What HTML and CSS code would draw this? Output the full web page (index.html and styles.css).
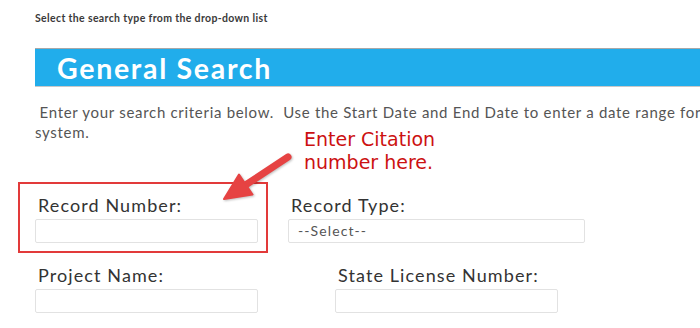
FILE: index.html
```html
<!DOCTYPE html>
<html lang="en">
  <head>
    <meta charset="UTF-8" />
    <meta name="viewport" content="width=device-width, initial-scale=1.0" />
    <title>General Search</title>
    <link rel="stylesheet" href="styles.css">
  </head>
  <body>
    <div class="page">
      <p class="hint">Select the search type from the drop-down list</p>

      <!-- Banner -->
      <div class="banner">
        <h1>General Search</h1>
      </div>

      <p class="intro">
        <span class="line">&nbsp;Enter your search criteria below.&nbsp; Use the Start Date and End Date to enter a date range for</span><br />
        system.
      </p>

      <!-- Form -->
      <div class="form">
        <div class="row row-first">
          <div class="field">
            <label for="recordNumber">Record Number:</label>
            <input type="text" id="recordNumber" class="short" />
          </div>
          <div class="field">
            <label for="recordType">Record Type:</label>
            <div class="select" id="recordType">--Select--</div>
          </div>
        </div>

        <div class="row row-second">
          <div class="field">
            <label for="projectName">Project Name:</label>
            <input type="text" id="projectName" class="short" />
          </div>
          <div class="field">
            <label for="licenseNumber">State License Number:</label>
            <input type="text" id="licenseNumber" class="short" />
          </div>
        </div>
      </div>

      <!-- Annotation -->
      <div class="callout">Enter Citation<br />number here.</div>
      <div class="highlight"></div>
      <svg class="arrow" width="700" height="328" viewBox="0 0 700 328">
        <line x1="288" y1="157" x2="244" y2="186" stroke="#e64343" stroke-width="7" stroke-linecap="round" />
        <polygon points="224,199 239,174.5 252.5,194.5" fill="#e64343" stroke="#e64343" stroke-width="2" stroke-linejoin="round" />
      </svg>
    </div>
  </body>
</html>
```

FILE: styles.css
```css
body {
  margin: 0;
  font-family: Lato, "Open Sans", sans-serif;
  background: #fff;
  color: #333;
}

.page {
  position: relative;
  width: 700px;
  height: 328px;
  overflow: hidden;
  padding-left: 35px;
  box-sizing: border-box;
}

.hint {
  margin: 12px 0 0;
  font-size: 10.5px;
  line-height: 12px;
  font-weight: bold;
  letter-spacing: 0.35px;
  color: #3a3a3a;
}

.banner {
  margin-top: 24px;
  width: 700px;
  height: 37px;
  background: #21adeb;
  border-top: 1px solid #a8a8a8;
  border-bottom: 1px solid #c8c8c8;
}

.banner h1 {
  margin: 0;
  padding: 2px 0 0 22px;
  font-size: 28.5px;
  line-height: 35px;
  font-weight: bold;
  letter-spacing: 1.7px;
  color: #fff;
}

.intro {
  margin: 15px 0 0;
  font-size: 15px;
  line-height: 20px;
  letter-spacing: 0.7px;
  color: #555;
}

.intro .line {
  white-space: nowrap;
}

.form {
  margin-top: 52px;
}

.row {
  display: flex;
}

.row-first {
  gap: 30px;
}

.row-second {
  gap: 77px;
  margin-top: 21px;
}

.field label {
  display: block;
  padding-left: 3px;
  font-size: 18px;
  line-height: 22px;
  letter-spacing: 1.1px;
  color: #333;
}

.field input,
.field .select {
  display: block;
  margin-top: 3px;
  height: 24px;
  border: 1px solid #e2e2e2;
  border-radius: 2px;
  box-sizing: border-box;
  background: #fff;
  outline: none;
}

.field input.short {
  width: 223px;
}

.field .select {
  width: 297px;
  padding-left: 9px;
  font-size: 14px;
  line-height: 22px;
  letter-spacing: 1.1px;
  color: #555;
}

.callout {
  position: absolute;
  left: 304px;
  top: 128px;
  font-family: "DejaVu Sans", Verdana, sans-serif;
  font-size: 19px;
  line-height: 23px;
  color: #cc1111;
}

.highlight {
  position: absolute;
  left: 18px;
  top: 182px;
  width: 246px;
  height: 67px;
  border: 2px solid #e23a3a;
}

.arrow {
  position: absolute;
  left: 0;
  top: 0;
  pointer-events: none;
  filter: drop-shadow(1px 1px 1px rgba(0, 0, 0, 0.25));
}
```
